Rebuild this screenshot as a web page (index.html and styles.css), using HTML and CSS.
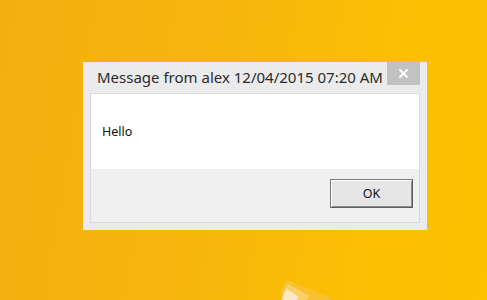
FILE: index.html
```html
<!DOCTYPE html>
<html>
<head>
<meta charset="utf-8">
<link rel="stylesheet" href="styles.css">
</head>
<body>
<div class="desktop">
  <svg class="pencil" width="50" height="25" viewBox="0 0 50 25">
    <polygon points="3,9 6,5 50,23 50,25 0,25 0,16" fill="#f8c130"/>
    <polygon points="4,13 7,9 28,21 24,25 1,25" fill="#f9cf6a"/>
    <polygon points="3,18 6,14 18,22 15,25 1,25" fill="#fbe9c6"/>
  </svg>
  <div class="window">
    <div class="titlebar">
      <span class="title">Message from alex 12/04/2015 07:20 AM</span>
      <div class="close">
        <svg width="11" height="11" viewBox="0 0 11 11"><path d="M1.5 1.5 L9.5 9.5 M9.5 1.5 L1.5 9.5" stroke="#fff" stroke-width="2"/></svg>
      </div>
    </div>
    <div class="client">
      <div class="message">Hello</div>
      <div class="buttons">
        <button class="ok">OK</button>
      </div>
    </div>
  </div>
</div>
</body>
</html>
```
FILE: styles.css
```css
html, body {
  margin: 0;
  padding: 0;
}
body {
  width: 487px;
  height: 300px;
  overflow: hidden;
}
.desktop {
  position: relative;
  width: 487px;
  height: 300px;
  background: linear-gradient(100deg, #f5ae12 0%, #f7b60c 45%, #fbbf04 75%, #fcc200 100%);
  font-family: "Noto Sans", "Open Sans", sans-serif;
}
.pencil {
  position: absolute;
  left: 281px;
  top: 275px;
}
.window {
  position: absolute;
  left: 83px;
  top: 62px;
  width: 344px;
  height: 168px;
  box-sizing: border-box;
  background: #ebebeb;
  padding: 0 7px 7px 7px;
  display: flex;
  flex-direction: column;
}
.titlebar {
  height: 31px;
  display: flex;
  align-items: flex-start;
  justify-content: space-between;
}
.title {
  font-size: 15px;
  color: #2b2b2b;
  margin-left: 7px;
  margin-top: 5px;
  white-space: nowrap;
}
.close {
  width: 33px;
  height: 23px;
  background: #c2c2c2;
  display: flex;
  align-items: center;
  justify-content: center;
}
.client {
  flex: 1;
  border: 1px solid #dadada;
  display: flex;
  flex-direction: column;
  background: #f0f0f0;
}
.message {
  height: 75px;
  background: #fff;
  box-sizing: border-box;
  padding: 29px 0 0 11px;
  font-size: 12.5px;
  color: #111;
}
.buttons {
  flex: 1;
  display: flex;
  justify-content: flex-end;
  align-items: flex-start;
  padding: 10px 6px 0 0;
}
.ok {
  width: 83px;
  height: 29px;
  box-sizing: border-box;
  border: 1px solid #7a7a7a;
  border-right-color: #5e5e5e;
  border-bottom-color: #5e5e5e;
  box-shadow: inset 1px 1px 0 #fdfdfd, inset -1px -1px 0 #8c8c8c;
  background: #e6e6e6;
  font-family: "Noto Sans", "Open Sans", sans-serif;
  font-size: 12.5px;
  color: #111;
  padding: 0;
}
```
